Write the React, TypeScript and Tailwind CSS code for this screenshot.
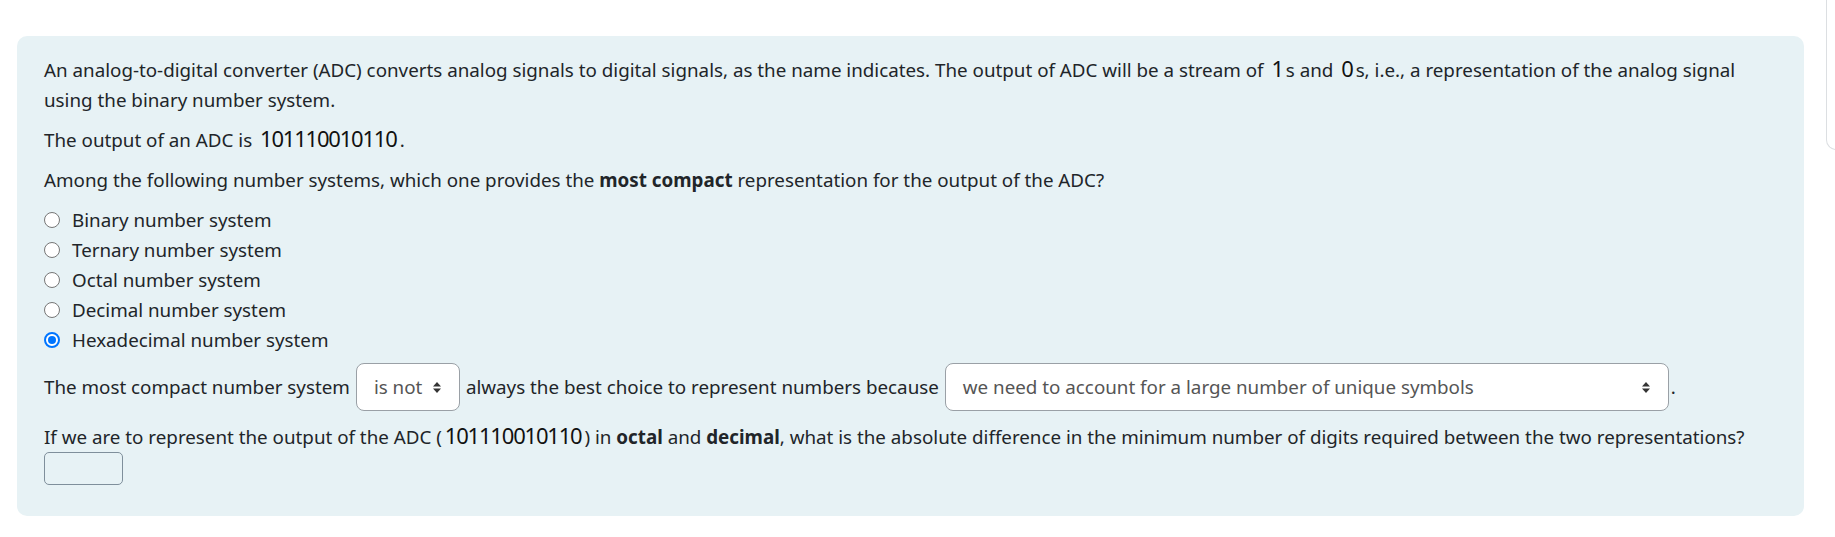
import { useState } from 'react'

const OPTIONS = [
  'Binary number system',
  'Ternary number system',
  'Octal number system',
  'Decimal number system',
  'Hexadecimal number system',
]

function Num({ children }: { children: string }) {
  return (
    <span className="mx-[3px] text-[22px] leading-none tracking-[-1.2px] text-[#111]">{children}</span>
  )
}

function UpDown() {
  return (
    <svg width="10" height="13" viewBox="0 0 10 13" className="shrink-0">
      <path d="M1 5.5 L5 1 L9 5.5 Z" fill="#333" />
      <path d="M1 7.5 L5 12 L9 7.5 Z" fill="#333" />
    </svg>
  )
}

function Select({ value, className }: { value: string; className: string }) {
  return (
    <div
      className={`flex h-[48px] shrink-0 items-center justify-between rounded-[8px] border border-[#9aa0a6] bg-white pl-[17px] pr-[17px] text-[#555] ${className}`}
    >
      <span>{value}</span>
      <UpDown />
    </div>
  )
}

function Radio({ checked }: { checked: boolean }) {
  return checked ? (
    <span className="flex h-[16px] w-[16px] items-center justify-center rounded-full border-2 border-[#0075ff] bg-white">
      <span className="h-[8px] w-[8px] rounded-full bg-[#0075ff]" />
    </span>
  ) : (
    <span className="h-[16px] w-[16px] rounded-full border border-[#767676] bg-white" />
  )
}

export default function App() {
  const [selected, setSelected] = useState(4)

  return (
    <div
      className="flex h-[537px] w-full items-start gap-[22px] overflow-hidden bg-white text-[18.8px] leading-[30px] text-[#212529]"
      style={{ fontFamily: '"Noto Sans", "Open Sans", sans-serif' }}
    >
      <div className="mt-[36px] ml-[17px] w-[1787px] shrink-0 rounded-[10px] bg-[#e7f2f5] px-[27px] pt-[19px] pb-[31px]">
        <p className="mb-[10px]">
          An analog-to-digital converter (ADC) converts analog signals to digital signals, as the name indicates. The
          output of ADC will be a stream of <Num>1</Num>s and <Num>0</Num>s, i.e., a representation of the analog
          signal using the binary number system.
        </p>
        <p className="mb-[10px]">
          The output of an ADC is <Num>101110010110</Num>.
        </p>
        <p className="mb-[10px]">
          Among the following number systems, which one provides the <b className="font-bold">most compact</b>{' '}
          representation for the output of the ADC?
        </p>

        <div className="mb-[8px] flex flex-col">
          {OPTIONS.map((o, i) => (
            <label key={o} className="flex h-[30px] cursor-pointer items-center" onClick={() => setSelected(i)}>
              <span className="flex w-[28px] justify-start">
                <Radio checked={selected === i} />
              </span>
              <span>{o}</span>
            </label>
          ))}
        </div>

        <div className="mb-[11px] flex items-center">
          <span>The most compact number system</span>
          <Select value="is not" className="mx-[6px] w-[104px]" />
          <span>always the best choice to represent numbers because</span>
          <Select value="we need to account for a large number of unique symbols" className="ml-[6px] w-[724px]" />
          <span className="ml-[2px]">.</span>
        </div>

        <p>
          If we are to represent the output of the ADC (<Num>101110010110</Num>) in <b className="font-bold">octal</b>{' '}
          and <b className="font-bold">decimal</b>, what is the absolute difference in the minimum number of digits
          required between the two representations?
        </p>
        <input
          type="text"
          className="block h-[33px] w-[79px] rounded-[5px] border border-[#7f8f9b] bg-transparent outline-none"
        />
      </div>

      <aside className="h-[150px] w-[300px] shrink-0 rounded-bl-[10px] border-b border-l border-[#dcdfe2] bg-white" />
    </div>
  )
}
